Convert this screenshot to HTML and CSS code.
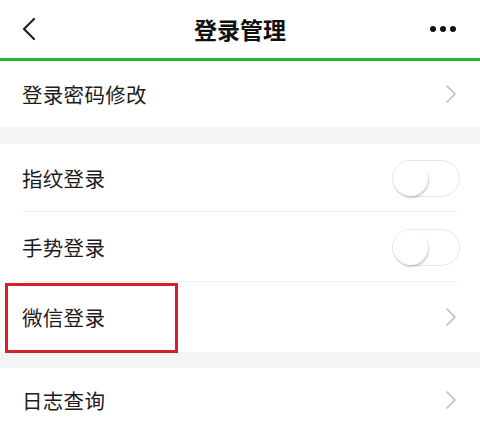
FILE: index.html
```html
<!DOCTYPE html>
<html lang="zh-CN">
<head>
<meta charset="utf-8">
<link rel="stylesheet" href="styles.css">
</head>
<body>
<div class="page">
  <header class="header">
    <svg class="back" width="16" height="24" viewBox="0 0 16 24"><path d="M13 2 L3 12 L13 22" fill="none" stroke="#222" stroke-width="2.2" stroke-linecap="round" stroke-linejoin="round"/></svg>
    <div class="title">登录管理</div>
    <div class="more"><span></span><span></span><span></span></div>
  </header>
  <div class="group">
    <div class="row r1"><span class="label">登录密码修改</span><svg class="chev" width="12" height="20" viewBox="0 0 12 20"><path d="M2 2 L10 10 L2 18" fill="none" stroke="#bdbdbd" stroke-width="1.6" stroke-linecap="round" stroke-linejoin="round"/></svg></div>
  </div>
  <div class="gap gap1"></div>
  <div class="group">
    <div class="row r2"><span class="label">指纹登录</span><span class="toggle"><span class="knob"></span></span></div>
    <div class="row r3"><span class="label">手势登录</span><span class="toggle"><span class="knob"></span></span></div>
    <div class="row r4"><span class="label">微信登录</span><svg class="chev" width="12" height="20" viewBox="0 0 12 20"><path d="M2 2 L10 10 L2 18" fill="none" stroke="#bdbdbd" stroke-width="1.6" stroke-linecap="round" stroke-linejoin="round"/></svg><span class="highlight"></span></div>
  </div>
  <div class="gap gap2"></div>
  <div class="group">
    <div class="row r5"><span class="label">日志查询</span><svg class="chev" width="12" height="20" viewBox="0 0 12 20"><path d="M2 2 L10 10 L2 18" fill="none" stroke="#bdbdbd" stroke-width="1.6" stroke-linecap="round" stroke-linejoin="round"/></svg></div>
  </div>
</div>
</body>
</html>
```
FILE: styles.css
```css
html, body {
  margin: 0;
  padding: 0;
  background: #ffffff;
}
.page {
  width: 480px;
  height: 432px;
  overflow: hidden;
  font-family: "Noto Sans CJK SC", "Noto Sans", sans-serif;
  color: #1c1c1c;
}
.header {
  height: 58px;
  border-bottom: 3px solid #27b42f;
  display: flex;
  align-items: center;
  justify-content: space-between;
  padding: 0 24px 0 21px;
  position: relative;
}
.back {
  display: block;
}
.title {
  position: absolute;
  left: 0;
  right: 0;
  text-align: center;
  font-size: 23px;
  font-weight: 700;
  color: #111;
  line-height: 58px;
  pointer-events: none;
}
.more {
  display: flex;
  gap: 4px;
}
.more span {
  width: 6px;
  height: 6px;
  border-radius: 50%;
  background: #111;
}
.group {
  background: #fff;
}
.row {
  display: flex;
  align-items: center;
  justify-content: space-between;
  padding: 0 23px 0 22px;
  position: relative;
}
.label {
  font-size: 20.5px;
  letter-spacing: 0.3px;
}
.r1 { height: 66px; }
.r2 { height: 68px; padding-right: 20px; }
.r3 { height: 70px; padding-right: 20px; }
.r4 { height: 70px; }
.r5 { height: 64px; }
.r2::after, .r3::after {
  content: "";
  position: absolute;
  left: 22px;
  right: 22px;
  bottom: 0;
  height: 1px;
  background: #f0f0f0;
}
.gap {
  background: #f5f5f5;
}
.gap1 { height: 17px; }
.gap2 { height: 16px; }
.toggle {
  width: 66px;
  height: 35px;
  border: 1px solid #e6e6e6;
  border-radius: 19px;
  position: relative;
  background: #fff;
}
.knob {
  position: absolute;
  left: 0;
  top: 0;
  width: 35px;
  height: 35px;
  border-radius: 50%;
  background: #fff;
  box-shadow: 1px 2px 2px rgba(0,0,0,0.18);
}
.chev {
  display: block;
}
.highlight {
  position: absolute;
  left: 5px;
  top: 1px;
  width: 167px;
  height: 64px;
  border: 3px solid #d5202c;
}
```
